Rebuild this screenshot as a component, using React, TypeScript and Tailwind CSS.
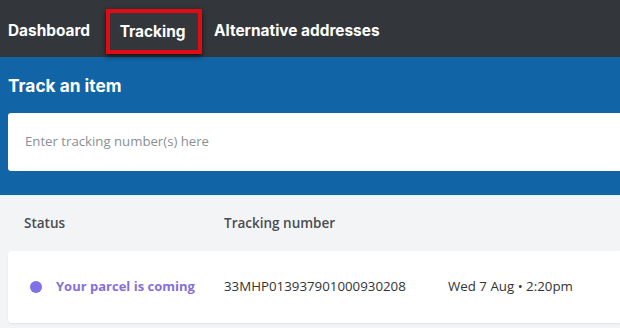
import React from "react";

export default function App() {
  const head = { fontFamily: "Inter, 'Noto Sans', sans-serif" };
  const body = { fontFamily: "'Open Sans', 'Noto Sans', sans-serif" };
  return (
    <div className="w-[620px] h-[328px] overflow-hidden bg-[#f3f4f6]">
      <nav className="h-[57px] bg-[#33373b] flex items-start pl-2 text-white font-bold text-[15.4px]" style={head}>
        <div className="h-[61px] flex items-center">Dashboard</div>
        <div className="ml-[16px] mt-[9px] w-[96px] h-[45px] border-[4px] border-[#e00b14] shadow-[0_2px_5px_rgba(0,0,0,0.7)] flex items-center justify-center pr-[3px]">
          Tracking
        </div>
        <div className="ml-[12px] h-[61px] flex items-center">Alternative addresses</div>
      </nav>
      <section className="bg-[#1164a6] h-[138px] pl-2 pt-[18px]">
        <h1 className="text-white font-bold text-[17.3px] leading-[22px]" style={head}>Track an item</h1>
        <div className="mt-[16px] h-[58px] bg-white rounded-l-[3px] flex items-center pl-[17px] text-[13.2px] text-[#8a8f96]" style={body}>
          Enter tracking number(s) here
        </div>
      </section>
      <div className="h-px bg-[#dcf2f8]" />
      <section className="pl-2" style={body}>
        <div className="h-[55px] flex items-center text-[13.5px] font-semibold text-[#4a4d52]">
          <div className="w-[216px] pl-4">Status</div>
          <div>Tracking number</div>
        </div>
        <div className="h-[72px] bg-white rounded-l-[4px] shadow-[0_1px_2px_rgba(0,0,0,0.08)] flex items-center text-[13.3px]">
          <div className="w-[216px] flex items-center pl-[22px]">
            <span className="w-[12px] h-[12px] rounded-full bg-[#7f6fe8]" />
            <span className="ml-[14px] font-bold text-[#8670d8] text-[13px]">Your parcel is coming</span>
          </div>
          <div className="w-[224px] text-[#333]">33MHP013937901000930208</div>
          <div className="text-[#333]">Wed 7 Aug • 2:20pm</div>
        </div>
      </section>
    </div>
  );
}
